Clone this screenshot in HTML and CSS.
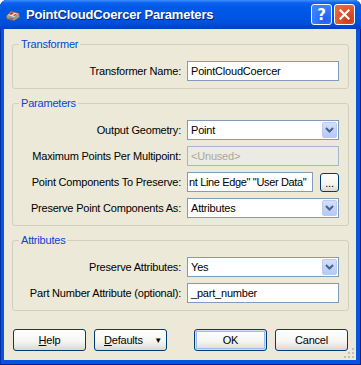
FILE: index.html
```html
<!DOCTYPE html>
<html lang="en">

<head>
    <meta charset="UTF-8">
    <title>PointCloudCoercer Parameters</title>
    <link rel="stylesheet" href="styles.css">
</head>

<body>

    <div class="window">

        <div class="titlebar">
            <svg class="app-icon" width="16" height="16" viewBox="0 0 16 16">
                <path d="M1 9 L6 4 L14 6 L15 10 L9 14 L2 12 Z" fill="#9a9a9a" stroke="#555" stroke-width="0.8"/>
                <path d="M3 8 L7 5 L13 7 L9 10 Z" fill="#e8e8e8"/>
                <path d="M4 7 L7 5 L9 6 L6 8 Z" fill="#d8261c"/>
                <path d="M8 8 L11 7 L12 8 L9 9 Z" fill="#d8261c"/>
                <path d="M3 11 L8 13 L8 11 Z" fill="#6e6e6e"/>
            </svg>
            <span class="title">PointCloudCoercer Parameters</span>
            <div class="caption-buttons">
                <span class="cap-btn cap-help">?</span>
                <span class="cap-btn cap-close">
                    <svg width="11" height="11" viewBox="0 0 11 11"><path d="M1.5 1.5 L9.5 9.5 M9.5 1.5 L1.5 9.5" stroke="#fff" stroke-width="2.2" stroke-linecap="square"/></svg>
                </span>
            </div>
        </div>

        <div class="client">

            <fieldset class="group">
                <legend>Transformer</legend>
                <div class="rows">
                    <label>Transformer Name:</label>
                    <div class="field">PointCloudCoercer</div>
                </div>
            </fieldset>

            <fieldset class="group">
                <legend>Parameters</legend>
                <div class="rows">
                    <label>Output Geometry:</label>
                    <div class="field combo"><span>Point</span><span class="drop"><svg width="9" height="6" viewBox="0 0 9 6"><path d="M1 1 L4.5 4.5 L8 1" fill="none" stroke="#4d6185" stroke-width="2"/></svg></span></div>

                    <label>Maximum Points Per Multipoint:</label>
                    <div class="field disabled">&lt;Unused&gt;</div>

                    <label>Point Components To Preserve:</label>
                    <div class="with-button">
                        <div class="field scrolled">nt Line Edge" "User Data"</div>
                        <span class="btn small">...</span>
                    </div>

                    <label>Preserve Point Components As:</label>
                    <div class="field combo"><span>Attributes</span><span class="drop"><svg width="9" height="6" viewBox="0 0 9 6"><path d="M1 1 L4.5 4.5 L8 1" fill="none" stroke="#4d6185" stroke-width="2"/></svg></span></div>
                </div>
            </fieldset>

            <fieldset class="group">
                <legend>Attributes</legend>
                <div class="rows">
                    <label>Preserve Attributes:</label>
                    <div class="field combo"><span>Yes</span><span class="drop"><svg width="9" height="6" viewBox="0 0 9 6"><path d="M1 1 L4.5 4.5 L8 1" fill="none" stroke="#4d6185" stroke-width="2"/></svg></span></div>

                    <label>Part Number Attribute (optional):</label>
                    <div class="field">_part_number</div>
                </div>
            </fieldset>

            <div class="actions">
                <div class="btn-group">
                    <span class="btn"><u>H</u>elp</span>
                    <span class="btn split"><span><u>D</u>efaults</span><span class="arrow">&#9660;</span></span>
                </div>
                <div class="btn-group">
                    <span class="btn default">OK</span>
                    <span class="btn">Cancel</span>
                </div>
            </div>

            <svg class="grip" width="11" height="11" viewBox="0 0 11 11">
                <rect x="8" y="0" width="2" height="2" fill="#c4c1b0"/>
                <rect x="4" y="4" width="2" height="2" fill="#c4c1b0"/>
                <rect x="8" y="4" width="2" height="2" fill="#c4c1b0"/>
                <rect x="0" y="8" width="2" height="2" fill="#c4c1b0"/>
                <rect x="4" y="8" width="2" height="2" fill="#c4c1b0"/>
                <rect x="8" y="8" width="2" height="2" fill="#c4c1b0"/>
            </svg>
        </div>

    </div>

</body>

</html>
```

FILE: styles.css
```css
body {
    margin: 0;
    background-color: #ffffff;
    font-family: "Liberation Sans", Arial, sans-serif;
    font-size: 11px;
}

.window {
    width: 361px;
    height: 365px;
    display: flex;
    flex-direction: column;
    background-color: #0855dd;
    border-radius: 7px 7px 0 0;
    box-shadow: inset 1px 0 #0030a8, inset -1px 0 #001e8c, inset 0 -1px #001e8c;
}

.titlebar {
    height: 29px;
    flex-shrink: 0;
    display: flex;
    align-items: center;
    padding: 0 6px 0 5px;
    border-radius: 7px 7px 0 0;
    background: linear-gradient(#3d8fff 0, #0a61ee 3px, #0058e6 8px, #0055e3 18px, #004ddb 24px, #003fc6 29px);
}

.app-icon {
    margin-right: 5px;
}

.title {
    color: #ffffff;
    font-weight: bold;
    font-size: 13px;
    letter-spacing: -0.2px;
    text-shadow: 1px 1px #0a1f77;
    flex: 1;
}

.caption-buttons {
    display: flex;
    gap: 2px;
}

.cap-btn {
    width: 21px;
    height: 21px;
    box-sizing: border-box;
    border: 1px solid #ffffff;
    border-radius: 3px;
    display: flex;
    align-items: center;
    justify-content: center;
    color: #ffffff;
}

.cap-help {
    background: radial-gradient(circle at 70% 75%, #1f5ef0, #3c80ff 70%);
    font-weight: bold;
    font-size: 15px;
    font-family: "DejaVu Sans", sans-serif;
}

.cap-close {
    background: radial-gradient(circle at 70% 75%, #c93a17, #e4683e 75%);
}

.client {
    flex: 1;
    margin: 0 5px 5px 4px;
    padding-top: 9px;
    background-color: #ece9d8;
    position: relative;
    letter-spacing: -0.2px;
}

.group {
    margin: 0 7px 8px 8px;
    padding: 10px 9px 7px 6px;
    border: 1px solid #d0d0bf;
    border-radius: 3px;
    min-width: 0;
}

.group legend {
    padding: 0 2px;
    color: #0046d5;
    line-height: 13px;
}

.rows {
    display: grid;
    grid-template-columns: 1fr 152px;
    column-gap: 6px;
    row-gap: 6px;
    align-items: center;
}

.rows label {
    text-align: right;
    white-space: nowrap;
    color: #000000;
}

.field {
    height: 20px;
    box-sizing: border-box;
    border: 1px solid #7f9db9;
    background-color: #ffffff;
    padding: 0 3px;
    line-height: 18px;
    white-space: nowrap;
    overflow: hidden;
}

.field.disabled {
    background-color: #ebebe4;
    color: #aca899;
    border-color: #a6b6c8;
}

.field.scrolled {
    flex: 1;
    padding: 0 1px;
    letter-spacing: -0.35px;
}

.combo {
    display: flex;
    justify-content: space-between;
    padding-right: 1px;
}

.drop {
    width: 15px;
    height: 16px;
    margin-top: 1px;
    box-sizing: border-box;
    border: 1px solid #b9cbf3;
    border-radius: 2px;
    background: linear-gradient(#d3dffb, #b5c8f7);
    display: flex;
    align-items: center;
    justify-content: center;
}

.with-button {
    display: flex;
    align-items: center;
    gap: 7px;
}

.btn {
    width: 73px;
    height: 22px;
    box-sizing: border-box;
    border: 1px solid #003c74;
    border-radius: 3px;
    background: linear-gradient(#ffffff, #f4f4f0 60%, #dcd8cc);
    display: flex;
    align-items: center;
    justify-content: center;
    color: #000000;
}

.btn.small {
    width: 19px;
    height: 19px;
    align-items: flex-end;
    padding-bottom: 4px;
    line-height: 8px;
}

.btn.split {
    justify-content: space-between;
    padding: 0 4px 0 9px;
}

.btn .arrow {
    font-size: 8px;
}

.btn.default {
    box-shadow: inset 0 0 0 1px #cee0fb, inset 0 0 0 2px #9ebaf0;
}

.actions {
    display: flex;
    justify-content: space-between;
    padding: 10px 8px 0 9px;
}

.btn-group {
    display: flex;
    gap: 8px;
}

.grip {
    position: absolute;
    right: 1px;
    bottom: 1px;
}
```
